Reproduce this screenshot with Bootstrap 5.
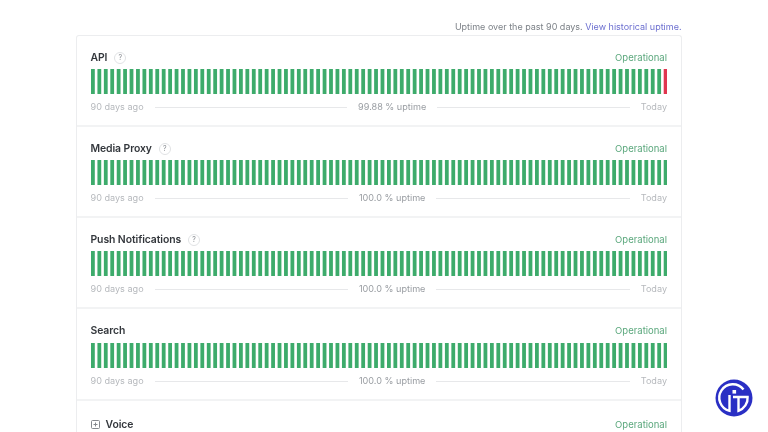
<!DOCTYPE html>
<html lang="en">
<head>
  <meta charset="UTF-8" />
  <meta name="viewport" content="width=device-width, initial-scale=1.0"/>
  <title>Status</title>
  <link href="https://cdn.jsdelivr.net/npm/bootstrap@5.3.2/dist/css/bootstrap.min.css" rel="stylesheet"/>
  <style>
    html, body { height: 432px; overflow: hidden; }
    body {
      background-color: #fff;
      font-family: Inter, "Liberation Sans", sans-serif;
      color: #3a3f45;
      position: relative;
    }
    .page-wrap { width: 605.5px; margin-left: 76px; padding-top: 21px; filter: blur(.35px); }
    .uptime-note { font-size: 9px; line-height: 12px; color: #7d8288; height: 14px; }
    .uptime-note a { color: #6c6fd0; text-decoration: none; }
    .status-box { border: 1px solid #ecedef; border-bottom: 0; border-radius: 3px 3px 0 0; }
    .comp-row { height: 91px; padding: 13px 13.5px 0 13.5px; border-bottom: 2px solid #f2f3f4; }
    .comp-row.tall-row { height: 92px; }
    .comp-row.tall-row .bar-strip { margin-top: 3px; }
    .comp-row.last-row { padding-top: 15px; }
    .comp-head { height: 18px; }
    .comp-name { font-size: 10.4px; font-weight: 600; letter-spacing: -.08px; color: #33373c; }
    .help-dot {
      width: 12px; height: 12px; border: 1px solid #e0e2e4; border-radius: 50%;
      font-size: 7px; line-height: 10px; text-align: center; color: #8a8e93; margin-left: 7px;
    }
    .comp-state { font-size: 9.5px; color: #5aa77c; }
    .bar-strip { display: block; width: 100%; height: 25px; margin-top: 2px; }
    .comp-foot { height: 26px; font-size: 9.1px; color: #b6b9bd; gap: 11px; }
    .comp-foot hr { flex: 1; margin: 0; border: 0; border-top: 1px solid #e7e8ea; opacity: 1; }
    .uptime-mid { color: #999da2; }
    .plus-box { width: 9px; height: 9px; margin-right: 6px; }
    .logo-mark { position: absolute; left: 715px; top: 379px; width: 38px; height: 38px; filter: blur(.3px); }
  </style>
</head>
<body>
  <div class="page-wrap">
    <div class="uptime-note text-end">Uptime over the past 90 days. <a href="#">View historical uptime.</a></div>
    <div class="status-box">
      <div class="comp-row">
        <div class="comp-head d-flex align-items-center justify-content-between">
          <div class="d-flex align-items-center"><span class="comp-name">API</span><span class="help-dot">?</span></div>
          <span class="comp-state">Operational</span>
        </div>
        <svg class="bar-strip" data-down="1" viewBox="0 0 577 25" preserveAspectRatio="none"></svg>
        <div class="comp-foot d-flex align-items-center"><span>90 days ago</span><hr><span class="uptime-mid">99.88 % uptime</span><hr><span>Today</span></div>
      </div>
      <div class="comp-row">
        <div class="comp-head d-flex align-items-center justify-content-between">
          <div class="d-flex align-items-center"><span class="comp-name">Media Proxy</span><span class="help-dot">?</span></div>
          <span class="comp-state">Operational</span>
        </div>
        <svg class="bar-strip" viewBox="0 0 577 25" preserveAspectRatio="none"></svg>
        <div class="comp-foot d-flex align-items-center"><span>90 days ago</span><hr><span class="uptime-mid">100.0 % uptime</span><hr><span>Today</span></div>
      </div>
      <div class="comp-row">
        <div class="comp-head d-flex align-items-center justify-content-between">
          <div class="d-flex align-items-center"><span class="comp-name">Push Notifications</span><span class="help-dot">?</span></div>
          <span class="comp-state">Operational</span>
        </div>
        <svg class="bar-strip" viewBox="0 0 577 25" preserveAspectRatio="none"></svg>
        <div class="comp-foot d-flex align-items-center"><span>90 days ago</span><hr><span class="uptime-mid">100.0 % uptime</span><hr><span>Today</span></div>
      </div>
      <div class="comp-row tall-row">
        <div class="comp-head d-flex align-items-center justify-content-between">
          <span class="comp-name">Search</span>
          <span class="comp-state">Operational</span>
        </div>
        <svg class="bar-strip" viewBox="0 0 577 25" preserveAspectRatio="none"></svg>
        <div class="comp-foot d-flex align-items-center"><span>90 days ago</span><hr><span class="uptime-mid">100.0 % uptime</span><hr><span>Today</span></div>
      </div>
      <div class="comp-row last-row border-0">
        <div class="comp-head d-flex align-items-center justify-content-between">
          <div class="d-flex align-items-center">
            <svg class="plus-box" viewBox="0 0 9 9" fill="none" stroke="#85898e"><rect x=".5" y=".5" width="8" height="8" rx="1"/><path d="M2.5 4.5h4M4.5 2.5v4"/></svg>
            <span class="comp-name">Voice</span>
          </div>
          <span class="comp-state">Operational</span>
        </div>
      </div>
    </div>
  </div>

  <svg class="logo-mark" viewBox="0 0 38 38">
    <circle cx="19" cy="19" r="18.5" fill="#2a2fc4"/>
    <path d="M28.5 10.5A13.5 13.5 0 1 0 14.5 31.8V16" fill="none" stroke="#fff" stroke-width="2.4"/>
    <path d="M18 18H32.6A13.5 13.5 0 0 1 23.5 31.8V18" fill="none" stroke="#fff" stroke-width="2.4"/>
    <rect x="17.5" y="11" width="3.6" height="3.6" fill="#fff"/>
  </svg>

  <script>
    const pitch = (577 - 3.8) / 89;
    document.querySelectorAll(".bar-strip").forEach(strip => {
      let bars = "";
      for (let i = 0; i < 90; i++) {
        const fill = strip.dataset.down && i === 89 ? "#e0354f" : "#3dab6b";
        bars += `<rect x="${(i * pitch).toFixed(2)}" y="0" width="3.8" height="25" fill="${fill}"/>`;
      }
      strip.innerHTML = bars;
    });
  </script>
  <script src="https://cdn.jsdelivr.net/npm/bootstrap@5.3.2/dist/js/bootstrap.bundle.min.js"></script>
</body>
</html>
